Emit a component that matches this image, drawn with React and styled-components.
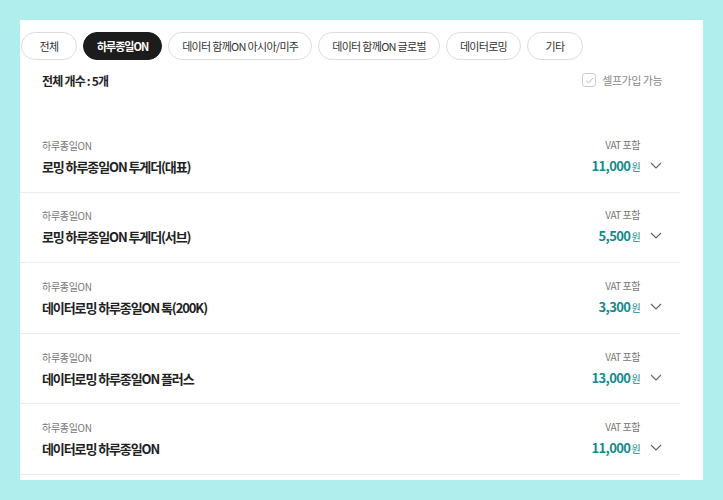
import React from "react";
import styled, { createGlobalStyle } from "styled-components";

const GlobalStyle = createGlobalStyle`
  body {
    margin: 0;
    background: #b0eded;
    font-family: "Noto Sans CJK KR", "Noto Sans", sans-serif;
    color: #222;
  }
`;

const tabs = ["전체", "하루종일ON", "데이터 함께ON 아시아/미주", "데이터 함께ON 글로벌", "데이터로밍", "기타"];

const products = [
  { name: "로밍 하루종일ON 투게더(대표)", price: "11,000" },
  { name: "로밍 하루종일ON 투게더(서브)", price: "5,500" },
  { name: "데이터로밍 하루종일ON 톡(200K)", price: "3,300" },
  { name: "데이터로밍 하루종일ON 플러스", price: "13,000" },
  { name: "데이터로밍 하루종일ON", price: "11,000" },
];

const Chevron = () => (
  <svg width="12" height="7" viewBox="0 0 12 7" fill="none">
    <path d="M1 1l5 5 5-5" stroke="#666" strokeWidth="1.2" />
  </svg>
);

const Check = () => (
  <svg width="9" height="7" viewBox="0 0 9 7" fill="none">
    <path d="M1 3.5l2.5 2.5L8 1" stroke="#bbb" strokeWidth="1" />
  </svg>
);

const App = () => {
  return (
    <>
      <GlobalStyle />
      <Page>
        <Panel>
          <TabBar>
            {tabs.map((t, i) => (
              <Tab key={t} $active={i === 1}>
                {t}
              </Tab>
            ))}
          </TabBar>
          <InfoRow>
            <Count>전체 개수 : 5개</Count>
            <SelfJoin>
              <CheckBox>
                <Check />
              </CheckBox>
              셀프가입 가능
            </SelfJoin>
          </InfoRow>
          <List>
            {products.map((p, i) => (
              <Row key={i}>
                <ItemText>
                  <Category>하루종일ON</Category>
                  <Title>{p.name}</Title>
                </ItemText>
                <PriceArea>
                  <PriceText>
                    <Vat>VAT 포함</Vat>
                    <Price>
                      {p.price}
                      <Won>원</Won>
                    </Price>
                  </PriceText>
                  <Chevron />
                </PriceArea>
              </Row>
            ))}
          </List>
        </Panel>
      </Page>
    </>
  );
};

const Page = styled.div`
  padding: 20px;
`;

const Panel = styled.div`
  background: #fff;
  height: 460px;
  overflow: hidden;
  padding-top: 12px;
  box-sizing: border-box;
`;

const TabBar = styled.div`
  display: flex;
  gap: 6px;
  padding-left: 1px;
`;

const Tab = styled.button`
  height: 28px;
  min-width: 56px;
  padding: 0 13px;
  border-radius: 14px;
  border: 1px solid ${(p) => (p.$active ? "#1c1c1c" : "#dcdcdc")};
  background: ${(p) => (p.$active ? "#1c1c1c" : "#fff")};
  color: ${(p) => (p.$active ? "#fff" : "#333")};
  font-family: inherit;
  font-size: 11px;
  font-weight: ${(p) => (p.$active ? 700 : 400)};
  letter-spacing: ${(p) => (p.$active ? "-1px" : "-0.7px")};
  white-space: nowrap;
  cursor: pointer;
`;

const InfoRow = styled.div`
  display: flex;
  justify-content: space-between;
  align-items: center;
  height: 20px;
  margin-top: 10px;
  padding: 0 41px 0 22px;
`;

const Count = styled.span`
  font-size: 12px;
  font-weight: 700;
  letter-spacing: -0.8px;
  color: #222;
`;

const SelfJoin = styled.label`
  display: flex;
  align-items: center;
  gap: 6px;
  font-size: 11px;
  letter-spacing: -0.5px;
  color: #888;
`;

const CheckBox = styled.span`
  display: flex;
  align-items: center;
  justify-content: center;
  width: 12px;
  height: 12px;
  border: 1px solid #ccc;
  border-radius: 3px;
`;

const List = styled.div`
  margin-top: 32px;
  width: 660px;
`;

const Row = styled.div`
  display: flex;
  justify-content: space-between;
  align-items: center;
  height: 69.6px;
  padding: 0 18px 0 22px;
  border-bottom: 1px solid #ebebeb;
`;

const ItemText = styled.div`
  display: flex;
  flex-direction: column;
  gap: 3px;
`;

const Category = styled.span`
  font-size: 10px;
  line-height: 16px;
  letter-spacing: -0.3px;
  color: #777;
`;

const Title = styled.span`
  font-size: 13px;
  line-height: 19px;
  font-weight: 700;
  letter-spacing: -1.1px;
  color: #222;
`;

const PriceArea = styled.div`
  display: flex;
  align-items: flex-end;
  gap: 10px;
  padding-bottom: 1px;
  svg {
    margin-bottom: 7px;
  }
`;

const PriceText = styled.div`
  display: flex;
  flex-direction: column;
  align-items: flex-end;
  gap: 3px;
`;

const Vat = styled.span`
  font-size: 10px;
  line-height: 16px;
  letter-spacing: -0.5px;
  color: #777;
`;

const Price = styled.span`
  font-size: 13px;
  line-height: 19px;
  font-weight: 700;
  letter-spacing: -0.6px;
  color: #128a8d;
`;

const Won = styled.span`
  font-size: 10px;
  font-weight: 400;
  margin-left: 1px;
`;

export default App;
